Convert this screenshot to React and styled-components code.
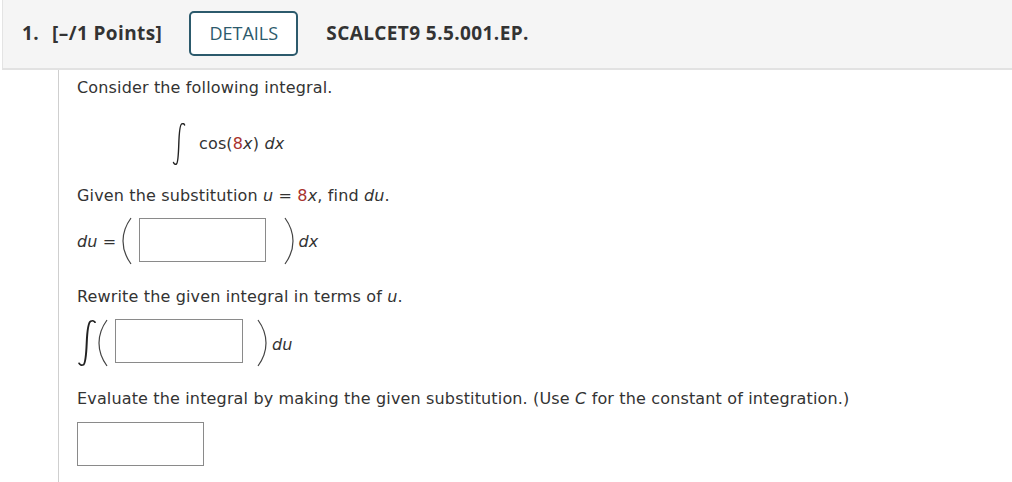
import React from "react";
import styled, { createGlobalStyle } from "styled-components";

const Global = createGlobalStyle`
  html, body { margin: 0; padding: 0; background: #fff; }
  body { font-family: "DejaVu Sans", Verdana, sans-serif; color: #333; }
`;

const Page = styled.div`
  width: 1012px;
  height: 482px;
  overflow: hidden;
  display: flex;
  flex-direction: column;
`;

const Header = styled.div`
  height: 66px;
  padding-bottom: 2px;
  margin-left: 2px;
  background: #f5f5f5;
  border-left: 1px solid #e4e4e4;
  border-bottom: 2px solid #e2e2e2;
  display: flex;
  align-items: center;
  padding-left: 19px;
  font-family: "Open Sans", sans-serif;
  font-weight: 700;
  font-size: 19px;
  letter-spacing: 0.4px;
  color: #333;
`;

const Num = styled.span`
  margin-right: 13px;
`;

const DetailsBtn = styled.div`
  margin-left: 27px;
  margin-right: 28px;
  width: 109px;
  height: 45px;
  box-sizing: border-box;
  border: 2px solid #2c5a6c;
  border-radius: 5px;
  display: flex;
  align-items: center;
  justify-content: center;
  font-weight: 400;
  font-size: 18px;
  letter-spacing: 0;
  color: #2c5a6c;
  background: #fff;
`;

const Body = styled.div`
  flex: 1;
  margin-left: 58px;
  border-left: 1px solid #cfcfcf;
  padding-left: 18px;
  font-size: 16px;
  letter-spacing: 0.15px;
`;

const Para = styled.div`
  line-height: 18px;
  margin-top: ${(p) => p.$top}px;
  white-space: nowrap;
`;

const MathRow = styled.div`
  display: flex;
  align-items: center;
  height: ${(p) => p.$h}px;
  margin-top: ${(p) => p.$top}px;
  padding-left: ${(p) => p.$indent || 0}px;
`;

const I = styled.i`
  font-style: italic;
`;

const Red = styled.span`
  color: #a8322d;
`;

const Box = styled.div`
  width: ${(p) => p.$w}px;
  height: ${(p) => p.$h}px;
  border: 1px solid #8a8a8a;
  background: #fff;
  box-sizing: border-box;
  margin-top: ${(p) => p.$top || 0}px;
`;

const Gap = styled.span`
  width: ${(p) => p.$w}px;
  flex: none;
`;

const Label = styled.span`
  margin-left: ${(p) => p.$left || 0}px;
  margin-right: ${(p) => p.$right || 0}px;
  font-size: ${(p) => p.$size || 16}px;
  margin-top: ${(p) => p.$dy || 0}px;
`;

const Integral = ({ w = 14, h = 44 }) => (
  <svg width={w} height={h} viewBox="0 0 14 44" preserveAspectRatio="none">
    <path
      d="M1.5 40.5 Q2.5 43 4.5 42 Q6.2 40.5 6.8 22 Q7.4 3.5 9.6 2 Q11.8 1 12.6 3"
      fill="none"
      stroke="#222"
      strokeWidth="1.4"
      strokeLinecap="round"
    />
  </svg>
);

const Paren = ({ right }) => (
  <svg width="12" height="48" viewBox="0 0 12 48">
    <path
      d={right ? "M2 1 Q10 12 10 24 Q10 36 2 47" : "M10 1 Q2 12 2 24 Q2 36 10 47"}
      fill="none"
      stroke="#444"
      strokeWidth="1.2"
    />
  </svg>
);

export default function App() {
  return (
    <Page>
      <Global />
      <Header>
        <Num>1.</Num>
        <span>[–/1 Points]</span>
        <DetailsBtn>DETAILS</DetailsBtn>
        <span>SCALCET9 5.5.001.EP.</span>
      </Header>
      <Body>
        <Para $top={9}>Consider the following integral.</Para>
        <MathRow $top={24} $h={45} $indent={95}>
          <Integral />
          <Label $left={13}>
            cos(<Red>8</Red><I>x</I>) <I>dx</I>
          </Label>
        </MathRow>
        <Para $top={21}>
          Given the substitution <I>u</I> = <Red>8</Red><I>x</I>, find <I>du</I>.
        </Para>
        <MathRow $top={11} $h={50}>
          <Label $right={5}>
            <I>du</I> =
          </Label>
          <Paren />
          <Gap $w={6} />
          <Box $w={127} $h={44} $top={-2} />
          <Gap $w={17} />
          <Paren right />
          <Label $left={3}>
            <I>dx</I>
          </Label>
        </MathRow>
        <Para $top={22}>
          Rewrite the given integral in terms of <I>u</I>.
        </Para>
        <MathRow $top={12} $h={50}>
          <Integral w={20} h={48} />
          <Paren />
          <Gap $w={6} />
          <Box $w={128} $h={44} $top={-4} />
          <Gap $w={13} />
          <Paren right />
          <Label $left={4} $dy={2}>
            <I>du</I>
          </Label>
        </MathRow>
        <Para $top={22}>
          Evaluate the integral by making the given substitution. (Use <I>C</I> for the constant of integration.)
        </Para>
        <Box $w={127} $h={44} $top={14} />
      </Body>
    </Page>
  );
}
